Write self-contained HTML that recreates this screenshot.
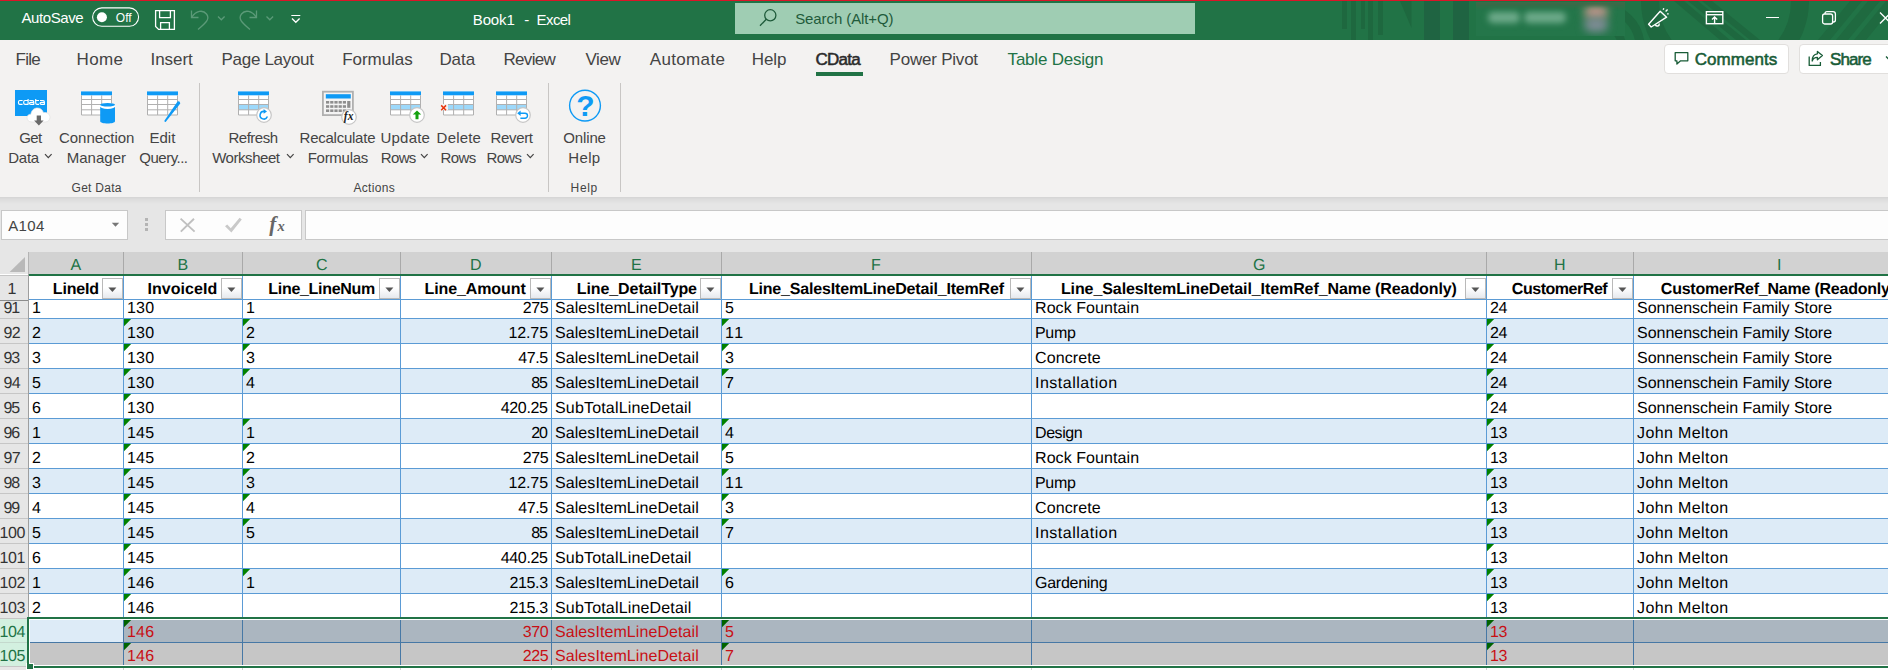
<!DOCTYPE html>
<html><head><meta charset="utf-8"><title>Book1 - Excel</title>
<style>
html,body{margin:0;padding:0;}
body{width:1888px;height:670px;overflow:hidden;position:relative;background:#fff;font-family:"Liberation Sans",sans-serif;}
#a{position:absolute;left:0;top:0;width:1888px;height:670px;overflow:hidden;}
#a div,#a svg,#a span{position:absolute;}
#a span{white-space:pre;line-height:20px;}
</style></head><body><div id="a">
<div style="left:0px;top:0px;width:1888px;height:40px;background:#217346;"></div>
<div style="left:1342px;top:1px;width:5px;height:28px;background:#1e683f;"></div>
<div style="left:1351px;top:1px;width:5px;height:39px;background:#1e683f;"></div>
<div style="left:1361px;top:1px;width:4px;height:28px;background:#1e683f;"></div>
<div style="left:1368px;top:1px;width:5px;height:39px;background:#1e683f;"></div>
<div style="left:1378px;top:1px;width:5px;height:34px;background:#1e683f;"></div>
<div style="left:1424px;top:1px;width:16px;height:39px;background:#1f6442;"></div>
<div style="left:1453px;top:1px;width:16px;height:39px;background:#1f6442;"></div>
<svg style="left:1395px;top:1px" width="20" height="30" viewBox="0 0 20 30"><path d="M5 0 L16.5 0 L16.5 27 Z" fill="#1e683f"/></svg>
<svg style="left:1600px;top:1px" width="288" height="39" viewBox="0 0 288 39"><circle cx="0" cy="46" r="40" fill="none" stroke="#1e683f" stroke-width="9"/><circle cx="0" cy="46" r="22" fill="none" stroke="#1e683f" stroke-width="8"/><path d="M74 0 L84 0 L130 39 L120 39 Z M88 0 L98 0 L146 39 L136 39 Z M102 0 L112 0 L160 39 L150 39 Z" fill="#1e683f"/><circle cx="125" cy="0" r="75" fill="none" stroke="#1e683f" stroke-width="18"/><path d="M250 0 L262 0 L230 39 L218 39 Z M268 0 L280 0 L248 39 L236 39 Z M286 0 L298 0 L266 39 L254 39 Z" fill="#1f6a40"/></svg>
<div style="left:1476px;top:2px;width:149px;height:34px;background:#24764a;overflow:hidden"><div style="left:12px;top:10px;width:32px;height:11px;background:#6daa8a;filter:blur(3px);border-radius:5px"></div><div style="left:48px;top:10px;width:42px;height:11px;background:#6daa8a;filter:blur(3px);border-radius:5px"></div><div style="left:108px;top:2px;width:24px;height:16px;background:#b39385;filter:blur(4px);border-radius:10px"></div><div style="left:108px;top:16px;width:24px;height:14px;background:#7f8c96;filter:blur(4px);border-radius:8px"></div><div style="left:-4px;top:-3px;width:157px;height:7px;background:#3f6848;filter:blur(2px)"></div></div>
<div style="left:0px;top:0px;width:1888px;height:1px;background:#dc1428;"></div>
<svg style="left:90px;top:5px" width="52" height="24" viewBox="0 0 52 24"><rect x="2.6" y="2.9" width="46" height="18.4" rx="9.2" fill="none" stroke="#fff" stroke-width="1.1"/></svg>
<svg style="left:95px;top:10px" width="14" height="14" viewBox="0 0 14 14"><circle cx="6.9" cy="7.2" r="5" fill="#fff"/></svg>
<svg style="left:154px;top:9px" width="22" height="22" viewBox="0 0 22 22" fill="none" stroke="#fff" stroke-width="1.3"><path d="M1.6 1.6 H20.4 V20.4 H4.6 L1.6 17.4 Z"/><path d="M5.6 1.6 V8.6 H16.4 V1.6"/><path d="M6.6 20.4 V13.6 H15.4 V20.4"/></svg>
<svg style="left:189px;top:8px" width="40" height="24" viewBox="0 0 40 24" fill="none" stroke="#5b9a78" stroke-width="1.3"><path d="M2.5 2.5 V9.5 H9.5"/><path d="M2.8 9.2 C7 2.5 14 1.5 17.5 6 C21 10.5 18 14 9 21.5"/><path d="M29 8.5 L32.3 11.8 L35.6 8.5"/></svg>
<svg style="left:237px;top:8px" width="40" height="24" viewBox="0 0 40 24" fill="none" stroke="#5b9a78" stroke-width="1.3"><path d="M19.5 2.5 V9.5 H12.5"/><path d="M19.2 9.2 C15 2.5 8 1.5 4.5 6 C1 10.5 4 14 13 21.5"/><path d="M29.5 8.5 L32.8 11.8 L36.1 8.5"/></svg>
<svg style="left:290px;top:13px" width="12" height="12" viewBox="0 0 12 12" fill="none" stroke="#fff" stroke-width="1.3"><path d="M1.3 2.5 H10.3" stroke-width="1"/><path d="M2 5.5 L5.8 9.3 L9.6 5.5"/></svg>
<div style="left:735px;top:3px;width:460px;height:31px;background:#9fcdb3;"></div>
<svg style="left:758px;top:7px" width="22" height="22" viewBox="0 0 22 22" fill="none" stroke="#1e5a3a" stroke-width="1.3"><circle cx="12.3" cy="8.3" r="5.6"/><path d="M8.3 12.3 L2 18.8"/></svg>
<svg style="left:1646px;top:6px" width="26" height="26" viewBox="0 0 26 26" fill="none" stroke="#fff" stroke-width="1.4" stroke-linejoin="round"><path d="M14.2 5.2 L20.6 11.2 L5.2 21 L2.6 18.2 Z"/><path d="M9.2 18.6 C10.5 21 13.5 20.3 13.3 17.5"/><path d="M17.2 3.8 L17.8 2.2 M19.6 5.6 L21.6 3.6 M21.2 8.2 L22.6 7.6"/></svg>
<svg style="left:1705px;top:10px" width="20" height="16" viewBox="0 0 20 16" fill="none" stroke="#fff" stroke-width="1.4"><rect x="1.4" y="1.7" width="16.4" height="12"/><path d="M1.4 4.7 H17.8"/><path d="M9.6 13 V7.2 M7 9.6 L9.6 7 L12.2 9.6"/></svg>
<div style="left:1765.5px;top:16.6px;width:13px;height:1.3px;background:#fff;"></div>
<svg style="left:1821px;top:10px" width="16" height="16" viewBox="0 0 16 16" fill="none" stroke="#fff" stroke-width="1.3"><rect x="1.6" y="4" width="10" height="10" rx="2"/><path d="M4 4 V3.6 C4 2.4 4.8 1.6 6 1.6 H12 C13.4 1.6 14.4 2.6 14.4 4 V10 C14.4 11.2 13.6 12 12.4 12 H11.8"/></svg>
<svg style="left:1878px;top:11px" width="12" height="14" viewBox="0 0 12 14" fill="none" stroke="#fff" stroke-width="1.3"><path d="M2 1.5 L13 12.5 M2 12.5 L13 1.5"/></svg>
<div style="left:0px;top:40px;width:1888px;height:157px;background:#f3f2f1;"></div>
<div style="left:815.5px;top:72.3px;width:47.5px;height:3.3px;background:#217346;"></div>
<div style="left:1664px;top:44px;width:124.5px;height:29.5px;background:#fff;border:1px solid #e1dfdd;border-radius:4px;box-sizing:border-box"></div>
<div style="left:1799px;top:44px;width:110px;height:29.5px;background:#fff;border:1px solid #e1dfdd;border-radius:4px;box-sizing:border-box"></div>
<svg style="left:1673px;top:51px" width="18" height="16" viewBox="0 0 18 16" fill="none" stroke="#185c37" stroke-width="1.3" stroke-linejoin="round"><path d="M2.2 1.6 H14.8 V9.8 H7.6 L3.9 13 V9.8 H2.2 Z"/></svg>
<svg style="left:1807px;top:50px" width="18" height="18" viewBox="0 0 18 18" fill="none" stroke="#185c37" stroke-width="1.3" stroke-linejoin="round"><path d="M2.2 6.6 V15.4 H13.4 V12"/><path d="M10.4 1.4 L15.4 5.6 L10.4 9.8 V7.4 C7.4 7.4 6 8.6 5.2 11 C5.2 6.6 7.4 4 10.4 3.8 Z"/></svg>
<svg style="left:1884.6px;top:55px" width="10" height="8" viewBox="0 0 10 8" fill="none" stroke="#185c37" stroke-width="1.3"><path d="M1 1.5 L5 5.5 L9 1.5"/></svg>
<div style="left:199px;top:83px;width:1px;height:109px;background:#c8c6c4;"></div>
<div style="left:548px;top:83px;width:1px;height:109px;background:#c8c6c4;"></div>
<div style="left:620px;top:83px;width:1px;height:109px;background:#c8c6c4;"></div>
<div style="left:15px;top:90px;width:32px;height:26px;background:#0e9af5;"></div>
<svg style="left:17px;top:98px" width="30" height="9" viewBox="0 0 30 9" fill="none" stroke="#fff" stroke-width="1.15" stroke-linejoin="round"><path d="M5.6 2.5 H2.9 C1.9 2.5 1.5 3 1.5 3.9 V4.9 C1.5 5.8 1.9 6.3 2.9 6.3 H5.6"/><path d="M11.1 1 V6.3 H8.1 C7.1 6.3 6.7 5.8 6.7 4.9 V3.9 C6.7 3 7.1 2.5 8.1 2.5 H11.1"/><path d="M12.4 2.5 H15.4 C16.4 2.5 16.8 3 16.8 3.9 V6.3 H13.8 C12.8 6.3 12.4 5.9 12.4 5.3 C12.4 4.7 12.8 4.3 13.8 4.3 H16.8"/><path d="M18.7 1 V4.9 C18.7 5.8 19.1 6.3 20.1 6.3 H22 M18 2.5 H22"/><path d="M23 2.5 H26 C27 2.5 27.4 3 27.4 3.9 V6.3 H24.4 C23.4 6.3 23 5.9 23 5.3 C23 4.7 23.4 4.3 24.4 4.3 H27.4"/></svg>
<svg style="left:25px;top:104.6px" width="28" height="22" viewBox="0 0 28 22"><path d="M7 17 C3.6 17 2 15 2 12.8 C2 10.6 3.8 9 5.9 9.3 C6.2 5.6 9 3 12.4 3 C15.4 3 17.6 4.8 18.4 7.6 C22 7 25 9 25 12.4 C25 15 23 17 20.2 17 Z" fill="#fff" stroke="#e2e2e2" stroke-width="0.7"/><path d="M11.7 10.4 H16 V15.6 H18.6 L13.85 20.4 L9.1 15.6 H11.7 Z" fill="#6a6a6a"/></svg>
<svg style="left:80px;top:90.5px" width="34" height="26" viewBox="0 0 34 26"><rect x="1" y="0.4" width="31" height="23.8" fill="#fff"/><rect x="1" y="0.4" width="31" height="3.9" fill="#0e9af5"/><g fill="none" stroke="#b0b0b0" stroke-width="1"><path d="M1.5 4.3 V24 H31.5 V4.3"/><path d="M1.4 8.5 H31.6 M1.4 13.5 H31.6 M1.4 18.8 H31.6 M11.6 4.3 V24 M21.7 4.3 V24"/></g></svg>
<svg style="left:99px;top:102px" width="18" height="23" viewBox="0 0 18 23"><path d="M1.2 3 V19.2 C1.2 22.2 16 22.2 16 19.2 V3 Z" fill="#0e9af5"/><ellipse cx="8.6" cy="4.0" rx="8" ry="2.9" fill="#fff"/><ellipse cx="8.6" cy="2.7" rx="7.4" ry="1.8" fill="#0e9af5"/></svg>
<svg style="left:146px;top:90.5px" width="34" height="26" viewBox="0 0 34 26"><rect x="1" y="0.4" width="31" height="23.8" fill="#fff"/><rect x="1" y="0.4" width="31" height="3.9" fill="#0e9af5"/><g fill="none" stroke="#b0b0b0" stroke-width="1"><path d="M1.5 4.3 V24 H31.5 V4.3"/><path d="M1.4 8.5 H31.6 M1.4 13.5 H31.6 M1.4 18.8 H31.6 M11.6 4.3 V24 M21.7 4.3 V24"/></g></svg>
<svg style="left:162px;top:100px" width="20" height="24" viewBox="0 0 20 24"><path d="M18.27 3.41 L3.83 21.73 Q2.6 22.4 2.37 20.67 L15.53 1.39 Q17.9 0.6 18.27 3.41 Z" fill="#0e9af5"/></svg>
<svg style="left:237px;top:90.5px" width="34" height="26" viewBox="0 0 34 26"><rect x="1" y="0.4" width="31" height="23.8" fill="#fff"/><rect x="1" y="13.5" width="31" height="5.3" fill="#9dd9fb"/><rect x="1" y="0.4" width="31" height="3.9" fill="#0e9af5"/><g fill="none" stroke="#b0b0b0" stroke-width="1"><path d="M1.5 4.3 V24 H31.5 V4.3"/><path d="M1.4 8.5 H31.6 M1.4 13.5 H31.6 M1.4 18.8 H31.6 M11.6 4.3 V24 M21.7 4.3 V24"/></g></svg>
<svg style="left:255px;top:105.8px" width="18" height="18" viewBox="-9 -9 18 18"><circle r="7.3" fill="#fff" stroke="#c6c6c6" stroke-width="1.2"/><path d="M3.4 1.6 A3.8 3.8 0 1 1 0.6 -3.5" fill="none" stroke="#0e9af5" stroke-width="1.5"/><path d="M-0.4 -6 L3 -3.4 L-0.4 -1.2 Z" fill="#0e9af5"/></svg>
<svg style="left:321px;top:90px" width="34" height="28" viewBox="0 0 34 28"><rect x="1.9" y="1.7" width="30" height="23.4" fill="#f4f4f4" stroke="#b0b0b0" stroke-width="1.8"/><rect x="4.8" y="4.2" width="25" height="4.3" fill="#0e9af5"/><g fill="#8e8e8e"><rect x="5.0" y="11.0" width="3.2" height="2.6"/><rect x="5.0" y="15.2" width="3.2" height="2.6"/><rect x="5.0" y="19.4" width="3.2" height="2.6"/><rect x="9.2" y="11.0" width="3.2" height="2.6"/><rect x="9.2" y="15.2" width="3.2" height="2.6"/><rect x="9.2" y="19.4" width="3.2" height="2.6"/><rect x="13.4" y="11.0" width="3.2" height="2.6"/><rect x="13.4" y="15.2" width="3.2" height="2.6"/><rect x="13.4" y="19.4" width="3.2" height="2.6"/><rect x="17.6" y="11.0" width="3.2" height="2.6"/><rect x="17.6" y="15.2" width="3.2" height="2.6"/><rect x="17.6" y="19.4" width="3.2" height="2.6"/><rect x="21.8" y="11.0" width="3.2" height="2.6"/><rect x="21.8" y="15.2" width="3.2" height="2.6"/><rect x="21.8" y="19.4" width="3.2" height="2.6"/><rect x="26.2" y="11" width="3.2" height="6.8"/></g></svg>
<svg style="left:339.5px;top:108.3px" width="18" height="18" viewBox="-9 -9 18 18"><circle r="7.3" fill="#fff" stroke="#c6c6c6" stroke-width="1.2"/><text x="-5.2" y="3.4" font-family="Liberation Serif" font-style="italic" font-weight="700" font-size="11.5" fill="#222">fx</text></svg>
<svg style="left:389px;top:90.5px" width="34" height="26" viewBox="0 0 34 26"><rect x="1" y="0.4" width="31" height="23.8" fill="#fff"/><rect x="1" y="13.5" width="31" height="5.3" fill="#9dd9fb"/><rect x="1" y="0.4" width="31" height="3.9" fill="#0e9af5"/><g fill="none" stroke="#b0b0b0" stroke-width="1"><path d="M1.5 4.3 V24 H31.5 V4.3"/><path d="M1.4 8.5 H31.6 M1.4 13.5 H31.6 M1.4 18.8 H31.6 M11.6 4.3 V24 M21.7 4.3 V24"/></g></svg>
<svg style="left:407.5px;top:105.8px" width="18" height="18" viewBox="-9 -9 18 18"><circle r="7.3" fill="#fff" stroke="#c6c6c6" stroke-width="1.2"/><path d="M0 -4.6 L4.2 -0.4 H1.5 V4.2 H-1.5 V-0.4 H-4.2 Z" fill="#13a10e"/></svg>
<svg style="left:442px;top:90.5px" width="34" height="26" viewBox="0 0 34 26"><rect x="1" y="0.4" width="31" height="23.8" fill="#fff"/><rect x="1" y="13.5" width="31" height="5.3" fill="#9dd9fb"/><rect x="1" y="0.4" width="31" height="3.9" fill="#0e9af5"/><g fill="none" stroke="#b0b0b0" stroke-width="1"><path d="M1.5 4.3 V24 H31.5 V4.3"/><path d="M1.4 8.5 H31.6 M1.4 13.5 H31.6 M1.4 18.8 H31.6 M11.6 4.3 V24 M21.7 4.3 V24"/></g></svg>
<div style="left:441px;top:104px;width:6.5px;height:6px;background:#f3f2f1;"></div>
<svg style="left:440px;top:103.5px" width="8" height="8" viewBox="0 0 8 8"><path d="M1.2 1.4 L6 6.2 M6 1.4 L1.2 6.2" stroke="#e8340c" stroke-width="1.5" fill="none"/></svg>
<svg style="left:495px;top:90.5px" width="34" height="26" viewBox="0 0 34 26"><rect x="1" y="0.4" width="31" height="23.8" fill="#fff"/><rect x="1" y="13.5" width="31" height="5.3" fill="#9dd9fb"/><rect x="1" y="0.4" width="31" height="3.9" fill="#0e9af5"/><g fill="none" stroke="#b0b0b0" stroke-width="1"><path d="M1.5 4.3 V24 H31.5 V4.3"/><path d="M1.4 8.5 H31.6 M1.4 13.5 H31.6 M1.4 18.8 H31.6 M11.6 4.3 V24 M21.7 4.3 V24"/></g></svg>
<svg style="left:513.5px;top:105.8px" width="18" height="18" viewBox="-9 -9 18 18"><circle r="7.3" fill="#fff" stroke="#c6c6c6" stroke-width="1.2"/><path d="M-3.4 -1.8 H2 A2.5 2.5 0 0 1 2 3.2 H-2.6" fill="none" stroke="#0e9af5" stroke-width="1.4"/><path d="M-5.8 -1.8 L-2.4 -4.6 V1 Z" fill="#0e9af5"/></svg>
<svg style="left:567px;top:88px" width="36" height="36" viewBox="0 0 36 36"><circle cx="18" cy="17.6" r="15.4" fill="none" stroke="#0e9af5" stroke-width="1.4"/></svg>
<svg style="left:44.3px;top:152.8px" width="9" height="7" viewBox="0 0 9 7" fill="none" stroke="#444" stroke-width="1.2"><path d="M1 1.2 L4.3 4.6 L7.6 1.2"/></svg>
<svg style="left:285.8px;top:152.8px" width="9" height="7" viewBox="0 0 9 7" fill="none" stroke="#444" stroke-width="1.2"><path d="M1 1.2 L4.3 4.6 L7.6 1.2"/></svg>
<svg style="left:420.2px;top:152.8px" width="9" height="7" viewBox="0 0 9 7" fill="none" stroke="#444" stroke-width="1.2"><path d="M1 1.2 L4.3 4.6 L7.6 1.2"/></svg>
<svg style="left:526.2px;top:152.8px" width="9" height="7" viewBox="0 0 9 7" fill="none" stroke="#444" stroke-width="1.2"><path d="M1 1.2 L4.3 4.6 L7.6 1.2"/></svg>
<div style="left:0;top:197px;width:1888px;height:55px;background:linear-gradient(#d4d4d4 0px,#dcdcdc 2px,#e6e6e6 7px,#e6e6e6 55px)"></div>
<div style="left:1px;top:210px;width:127px;height:30px;background:#fdfdfd;border:1px solid #c8c8c8;box-sizing:border-box"></div>
<div style="left:165px;top:210px;width:137px;height:30px;background:#fdfdfd;border:1px solid #c8c8c8;box-sizing:border-box"></div>
<div style="left:305px;top:210px;width:1600px;height:30px;background:#fdfdfd;border:1px solid #c8c8c8;box-sizing:border-box"></div>
<svg style="left:111px;top:222px" width="9" height="6" viewBox="0 0 9 6"><path d="M0.8 0.8 H8.2 L4.5 4.8 Z" fill="#777"/></svg>
<div style="left:145.2px;top:218.4px;width:2.8px;height:2.5px;background:#b4b4b4;"></div>
<div style="left:145.2px;top:223.3px;width:2.8px;height:2.5px;background:#b4b4b4;"></div>
<div style="left:145.2px;top:228.2px;width:2.8px;height:2.5px;background:#b4b4b4;"></div>
<svg style="left:179px;top:217px" width="18" height="16" viewBox="0 0 18 16" fill="none" stroke="#c0c0c0" stroke-width="1.9"><path d="M1.6 1.6 L15.6 14.6 M15 1.8 L1.8 14.6"/></svg>
<svg style="left:224px;top:217px" width="19" height="17" viewBox="0 0 19 17" fill="#c9c9c9" stroke="none"><path d="M1 9.2 L3.2 7.4 L6.8 11.2 L15.6 0.8 L17.8 2.4 L7.4 15.6 Z"/></svg>
<div style="left:0px;top:252px;width:1888px;height:22px;background:#e6e6e6;"></div>
<div style="left:28px;top:252px;width:1860px;height:22px;background:#d2d2d2;"></div>
<div style="left:28px;top:274px;width:1860px;height:2px;background:#217346;"></div>
<svg style="left:8px;top:256px" width="18" height="17" viewBox="0 0 18 17"><path d="M17 1 V16 H1.6 Z" fill="#b9b9b9"/></svg>
<div style="left:123px;top:252px;width:1px;height:22px;background:#a9a9a9;"></div>
<div style="left:242px;top:252px;width:1px;height:22px;background:#a9a9a9;"></div>
<div style="left:400px;top:252px;width:1px;height:22px;background:#a9a9a9;"></div>
<div style="left:551px;top:252px;width:1px;height:22px;background:#a9a9a9;"></div>
<div style="left:721px;top:252px;width:1px;height:22px;background:#a9a9a9;"></div>
<div style="left:1031px;top:252px;width:1px;height:22px;background:#a9a9a9;"></div>
<div style="left:1486px;top:252px;width:1px;height:22px;background:#a9a9a9;"></div>
<div style="left:1633px;top:252px;width:1px;height:22px;background:#a9a9a9;"></div>
<div style="left:28px;top:276px;width:1860px;height:394px;background:#fff;"></div>
<div style="left:0px;top:276px;width:28px;height:394px;background:#e6e6e6;"></div>
<div style="left:28px;top:252px;width:1px;height:22px;background:#b4b4b4;"></div>
<div style="left:28px;top:274px;width:1px;height:396px;background:#9e9e9e;"></div>
<div style="left:29px;top:319px;width:1859px;height:24px;background:#ddebf7;"></div>
<div style="left:29px;top:369px;width:1859px;height:24px;background:#ddebf7;"></div>
<div style="left:29px;top:419px;width:1859px;height:24px;background:#ddebf7;"></div>
<div style="left:29px;top:469px;width:1859px;height:24px;background:#ddebf7;"></div>
<div style="left:29px;top:519px;width:1859px;height:24px;background:#ddebf7;"></div>
<div style="left:29px;top:569px;width:1859px;height:24px;background:#ddebf7;"></div>
<div style="left:29px;top:619px;width:1859px;height:23px;background:#abb6c0;"></div>
<div style="left:29px;top:643px;width:1859px;height:22px;background:#c6c6c6;"></div>
<div style="left:30px;top:620px;width:93px;height:22px;background:#ddebf7;"></div>
<div style="left:29px;top:299px;width:1859px;height:1px;background:#5b9bd5;"></div>
<div style="left:29px;top:318px;width:1859px;height:1px;background:#5b9bd5;"></div>
<div style="left:29px;top:343px;width:1859px;height:1px;background:#5b9bd5;"></div>
<div style="left:29px;top:368px;width:1859px;height:1px;background:#5b9bd5;"></div>
<div style="left:29px;top:393px;width:1859px;height:1px;background:#5b9bd5;"></div>
<div style="left:29px;top:418px;width:1859px;height:1px;background:#5b9bd5;"></div>
<div style="left:29px;top:443px;width:1859px;height:1px;background:#5b9bd5;"></div>
<div style="left:29px;top:468px;width:1859px;height:1px;background:#5b9bd5;"></div>
<div style="left:29px;top:493px;width:1859px;height:1px;background:#5b9bd5;"></div>
<div style="left:29px;top:518px;width:1859px;height:1px;background:#5b9bd5;"></div>
<div style="left:29px;top:543px;width:1859px;height:1px;background:#5b9bd5;"></div>
<div style="left:29px;top:568px;width:1859px;height:1px;background:#5b9bd5;"></div>
<div style="left:29px;top:593px;width:1859px;height:1px;background:#5b9bd5;"></div>
<div style="left:29px;top:642px;width:1859px;height:1px;background:#4778a5;"></div>
<div style="left:123px;top:276px;width:1px;height:341px;background:#5b9bd5;"></div>
<div style="left:123px;top:620px;width:1px;height:45px;background:#4778a5;"></div>
<div style="left:123px;top:668px;width:1px;height:2px;background:#d4d4d4;"></div>
<div style="left:242px;top:276px;width:1px;height:341px;background:#5b9bd5;"></div>
<div style="left:242px;top:620px;width:1px;height:45px;background:#4778a5;"></div>
<div style="left:242px;top:668px;width:1px;height:2px;background:#d4d4d4;"></div>
<div style="left:400px;top:276px;width:1px;height:341px;background:#5b9bd5;"></div>
<div style="left:400px;top:620px;width:1px;height:45px;background:#4778a5;"></div>
<div style="left:400px;top:668px;width:1px;height:2px;background:#d4d4d4;"></div>
<div style="left:551px;top:276px;width:1px;height:341px;background:#5b9bd5;"></div>
<div style="left:551px;top:620px;width:1px;height:45px;background:#4778a5;"></div>
<div style="left:551px;top:668px;width:1px;height:2px;background:#d4d4d4;"></div>
<div style="left:721px;top:276px;width:1px;height:341px;background:#5b9bd5;"></div>
<div style="left:721px;top:620px;width:1px;height:45px;background:#4778a5;"></div>
<div style="left:721px;top:668px;width:1px;height:2px;background:#d4d4d4;"></div>
<div style="left:1031px;top:276px;width:1px;height:341px;background:#5b9bd5;"></div>
<div style="left:1031px;top:620px;width:1px;height:45px;background:#4778a5;"></div>
<div style="left:1031px;top:668px;width:1px;height:2px;background:#d4d4d4;"></div>
<div style="left:1486px;top:276px;width:1px;height:341px;background:#5b9bd5;"></div>
<div style="left:1486px;top:620px;width:1px;height:45px;background:#4778a5;"></div>
<div style="left:1486px;top:668px;width:1px;height:2px;background:#d4d4d4;"></div>
<div style="left:1633px;top:276px;width:1px;height:341px;background:#5b9bd5;"></div>
<div style="left:1633px;top:620px;width:1px;height:45px;background:#4778a5;"></div>
<div style="left:1633px;top:668px;width:1px;height:2px;background:#d4d4d4;"></div>
<div style="left:0px;top:300px;width:28px;height:1px;background:#8c8c8c;"></div>
<div style="left:0px;top:318px;width:28px;height:1px;background:#c6c6c6;"></div>
<div style="left:0px;top:343px;width:28px;height:1px;background:#c6c6c6;"></div>
<div style="left:0px;top:368px;width:28px;height:1px;background:#c6c6c6;"></div>
<div style="left:0px;top:393px;width:28px;height:1px;background:#c6c6c6;"></div>
<div style="left:0px;top:418px;width:28px;height:1px;background:#c6c6c6;"></div>
<div style="left:0px;top:443px;width:28px;height:1px;background:#c6c6c6;"></div>
<div style="left:0px;top:468px;width:28px;height:1px;background:#c6c6c6;"></div>
<div style="left:0px;top:493px;width:28px;height:1px;background:#c6c6c6;"></div>
<div style="left:0px;top:518px;width:28px;height:1px;background:#c6c6c6;"></div>
<div style="left:0px;top:543px;width:28px;height:1px;background:#c6c6c6;"></div>
<div style="left:0px;top:568px;width:28px;height:1px;background:#c6c6c6;"></div>
<div style="left:0px;top:593px;width:28px;height:1px;background:#c6c6c6;"></div>
<div style="left:0px;top:618px;width:28px;height:1px;background:#c6c6c6;"></div>
<div style="left:0px;top:642px;width:28px;height:1px;background:#c6c6c6;"></div>
<div style="left:0px;top:666px;width:28px;height:1px;background:#c6c6c6;"></div>
<div style="left:0px;top:275px;width:28px;height:1px;background:#c6c6c6;"></div>
<div style="left:0px;top:619px;width:27px;height:47px;background:#d3f0e0;"></div>
<div style="left:0px;top:642px;width:27px;height:1px;background:#c4d9cd;"></div>
<div style="left:0px;top:666px;width:27px;height:1px;background:#c6c6c6;"></div>
<div style="left:0px;top:667px;width:28px;height:3px;background:#e6e6e6;"></div>
<div style="left:28px;top:668px;width:1px;height:2px;background:#9e9e9e;"></div>
<div style="left:27px;top:617px;width:1861px;height:2px;background:#217346;"></div>
<div style="left:29px;top:619px;width:1859px;height:1px;background:#fff;"></div>
<div style="left:27px;top:617px;width:2px;height:51px;background:#217346;"></div>
<div style="left:29px;top:619px;width:1px;height:46px;background:#fff;"></div>
<div style="left:29px;top:665px;width:1859px;height:1px;background:#fff;"></div>
<div style="left:29px;top:666px;width:1859px;height:2px;background:#217346;"></div>
<div style="left:26px;top:663px;width:8px;height:7px;background:#fff;"></div>
<div style="left:27px;top:664px;width:6px;height:5px;background:#217346;"></div>
<div style="left:27px;top:617px;width:2px;height:47px;background:#217346;"></div>
<div style="left:102px;top:278px;width:21px;height:21px;box-sizing:border-box;border:1px solid #b9b9b9;background:linear-gradient(#fff,#fff 45%,#e6e9ee)"></div><svg style="left:108.4px;top:286.6px" width="9" height="6" viewBox="0 0 9 6"><path d="M0.4 0.6 H8.4 L4.4 4.9 Z" fill="#555"/></svg>
<div style="left:221px;top:278px;width:21px;height:21px;box-sizing:border-box;border:1px solid #b9b9b9;background:linear-gradient(#fff,#fff 45%,#e6e9ee)"></div><svg style="left:227.4px;top:286.6px" width="9" height="6" viewBox="0 0 9 6"><path d="M0.4 0.6 H8.4 L4.4 4.9 Z" fill="#555"/></svg>
<div style="left:379px;top:278px;width:21px;height:21px;box-sizing:border-box;border:1px solid #b9b9b9;background:linear-gradient(#fff,#fff 45%,#e6e9ee)"></div><svg style="left:385.4px;top:286.6px" width="9" height="6" viewBox="0 0 9 6"><path d="M0.4 0.6 H8.4 L4.4 4.9 Z" fill="#555"/></svg>
<div style="left:530px;top:278px;width:21px;height:21px;box-sizing:border-box;border:1px solid #b9b9b9;background:linear-gradient(#fff,#fff 45%,#e6e9ee)"></div><svg style="left:536.4px;top:286.6px" width="9" height="6" viewBox="0 0 9 6"><path d="M0.4 0.6 H8.4 L4.4 4.9 Z" fill="#555"/></svg>
<div style="left:700px;top:278px;width:21px;height:21px;box-sizing:border-box;border:1px solid #b9b9b9;background:linear-gradient(#fff,#fff 45%,#e6e9ee)"></div><svg style="left:706.4px;top:286.6px" width="9" height="6" viewBox="0 0 9 6"><path d="M0.4 0.6 H8.4 L4.4 4.9 Z" fill="#555"/></svg>
<div style="left:1010px;top:278px;width:21px;height:21px;box-sizing:border-box;border:1px solid #b9b9b9;background:linear-gradient(#fff,#fff 45%,#e6e9ee)"></div><svg style="left:1016.4px;top:286.6px" width="9" height="6" viewBox="0 0 9 6"><path d="M0.4 0.6 H8.4 L4.4 4.9 Z" fill="#555"/></svg>
<div style="left:1465px;top:278px;width:21px;height:21px;box-sizing:border-box;border:1px solid #b9b9b9;background:linear-gradient(#fff,#fff 45%,#e6e9ee)"></div><svg style="left:1471.4px;top:286.6px" width="9" height="6" viewBox="0 0 9 6"><path d="M0.4 0.6 H8.4 L4.4 4.9 Z" fill="#555"/></svg>
<div style="left:1612px;top:278px;width:21px;height:21px;box-sizing:border-box;border:1px solid #b9b9b9;background:linear-gradient(#fff,#fff 45%,#e6e9ee)"></div><svg style="left:1618.4px;top:286.6px" width="9" height="6" viewBox="0 0 9 6"><path d="M0.4 0.6 H8.4 L4.4 4.9 Z" fill="#555"/></svg>
<svg style="left:124px;top:319px" width="8" height="8" viewBox="0 0 8 8"><path d="M0 0 H7.2 L0 7.2 Z" fill="#008000"/></svg>
<svg style="left:1487px;top:319px" width="8" height="8" viewBox="0 0 8 8"><path d="M0 0 H7.2 L0 7.2 Z" fill="#008000"/></svg>
<svg style="left:243px;top:319px" width="8" height="8" viewBox="0 0 8 8"><path d="M0 0 H7.2 L0 7.2 Z" fill="#008000"/></svg>
<svg style="left:722px;top:319px" width="8" height="8" viewBox="0 0 8 8"><path d="M0 0 H7.2 L0 7.2 Z" fill="#008000"/></svg>
<svg style="left:124px;top:344px" width="8" height="8" viewBox="0 0 8 8"><path d="M0 0 H7.2 L0 7.2 Z" fill="#008000"/></svg>
<svg style="left:1487px;top:344px" width="8" height="8" viewBox="0 0 8 8"><path d="M0 0 H7.2 L0 7.2 Z" fill="#008000"/></svg>
<svg style="left:243px;top:344px" width="8" height="8" viewBox="0 0 8 8"><path d="M0 0 H7.2 L0 7.2 Z" fill="#008000"/></svg>
<svg style="left:722px;top:344px" width="8" height="8" viewBox="0 0 8 8"><path d="M0 0 H7.2 L0 7.2 Z" fill="#008000"/></svg>
<svg style="left:124px;top:369px" width="8" height="8" viewBox="0 0 8 8"><path d="M0 0 H7.2 L0 7.2 Z" fill="#008000"/></svg>
<svg style="left:1487px;top:369px" width="8" height="8" viewBox="0 0 8 8"><path d="M0 0 H7.2 L0 7.2 Z" fill="#008000"/></svg>
<svg style="left:243px;top:369px" width="8" height="8" viewBox="0 0 8 8"><path d="M0 0 H7.2 L0 7.2 Z" fill="#008000"/></svg>
<svg style="left:722px;top:369px" width="8" height="8" viewBox="0 0 8 8"><path d="M0 0 H7.2 L0 7.2 Z" fill="#008000"/></svg>
<svg style="left:124px;top:394px" width="8" height="8" viewBox="0 0 8 8"><path d="M0 0 H7.2 L0 7.2 Z" fill="#008000"/></svg>
<svg style="left:1487px;top:394px" width="8" height="8" viewBox="0 0 8 8"><path d="M0 0 H7.2 L0 7.2 Z" fill="#008000"/></svg>
<svg style="left:124px;top:419px" width="8" height="8" viewBox="0 0 8 8"><path d="M0 0 H7.2 L0 7.2 Z" fill="#008000"/></svg>
<svg style="left:1487px;top:419px" width="8" height="8" viewBox="0 0 8 8"><path d="M0 0 H7.2 L0 7.2 Z" fill="#008000"/></svg>
<svg style="left:243px;top:419px" width="8" height="8" viewBox="0 0 8 8"><path d="M0 0 H7.2 L0 7.2 Z" fill="#008000"/></svg>
<svg style="left:722px;top:419px" width="8" height="8" viewBox="0 0 8 8"><path d="M0 0 H7.2 L0 7.2 Z" fill="#008000"/></svg>
<svg style="left:124px;top:444px" width="8" height="8" viewBox="0 0 8 8"><path d="M0 0 H7.2 L0 7.2 Z" fill="#008000"/></svg>
<svg style="left:1487px;top:444px" width="8" height="8" viewBox="0 0 8 8"><path d="M0 0 H7.2 L0 7.2 Z" fill="#008000"/></svg>
<svg style="left:243px;top:444px" width="8" height="8" viewBox="0 0 8 8"><path d="M0 0 H7.2 L0 7.2 Z" fill="#008000"/></svg>
<svg style="left:722px;top:444px" width="8" height="8" viewBox="0 0 8 8"><path d="M0 0 H7.2 L0 7.2 Z" fill="#008000"/></svg>
<svg style="left:124px;top:469px" width="8" height="8" viewBox="0 0 8 8"><path d="M0 0 H7.2 L0 7.2 Z" fill="#008000"/></svg>
<svg style="left:1487px;top:469px" width="8" height="8" viewBox="0 0 8 8"><path d="M0 0 H7.2 L0 7.2 Z" fill="#008000"/></svg>
<svg style="left:243px;top:469px" width="8" height="8" viewBox="0 0 8 8"><path d="M0 0 H7.2 L0 7.2 Z" fill="#008000"/></svg>
<svg style="left:722px;top:469px" width="8" height="8" viewBox="0 0 8 8"><path d="M0 0 H7.2 L0 7.2 Z" fill="#008000"/></svg>
<svg style="left:124px;top:494px" width="8" height="8" viewBox="0 0 8 8"><path d="M0 0 H7.2 L0 7.2 Z" fill="#008000"/></svg>
<svg style="left:1487px;top:494px" width="8" height="8" viewBox="0 0 8 8"><path d="M0 0 H7.2 L0 7.2 Z" fill="#008000"/></svg>
<svg style="left:243px;top:494px" width="8" height="8" viewBox="0 0 8 8"><path d="M0 0 H7.2 L0 7.2 Z" fill="#008000"/></svg>
<svg style="left:722px;top:494px" width="8" height="8" viewBox="0 0 8 8"><path d="M0 0 H7.2 L0 7.2 Z" fill="#008000"/></svg>
<svg style="left:124px;top:519px" width="8" height="8" viewBox="0 0 8 8"><path d="M0 0 H7.2 L0 7.2 Z" fill="#008000"/></svg>
<svg style="left:1487px;top:519px" width="8" height="8" viewBox="0 0 8 8"><path d="M0 0 H7.2 L0 7.2 Z" fill="#008000"/></svg>
<svg style="left:243px;top:519px" width="8" height="8" viewBox="0 0 8 8"><path d="M0 0 H7.2 L0 7.2 Z" fill="#008000"/></svg>
<svg style="left:722px;top:519px" width="8" height="8" viewBox="0 0 8 8"><path d="M0 0 H7.2 L0 7.2 Z" fill="#008000"/></svg>
<svg style="left:124px;top:544px" width="8" height="8" viewBox="0 0 8 8"><path d="M0 0 H7.2 L0 7.2 Z" fill="#008000"/></svg>
<svg style="left:1487px;top:544px" width="8" height="8" viewBox="0 0 8 8"><path d="M0 0 H7.2 L0 7.2 Z" fill="#008000"/></svg>
<svg style="left:124px;top:569px" width="8" height="8" viewBox="0 0 8 8"><path d="M0 0 H7.2 L0 7.2 Z" fill="#008000"/></svg>
<svg style="left:1487px;top:569px" width="8" height="8" viewBox="0 0 8 8"><path d="M0 0 H7.2 L0 7.2 Z" fill="#008000"/></svg>
<svg style="left:243px;top:569px" width="8" height="8" viewBox="0 0 8 8"><path d="M0 0 H7.2 L0 7.2 Z" fill="#008000"/></svg>
<svg style="left:722px;top:569px" width="8" height="8" viewBox="0 0 8 8"><path d="M0 0 H7.2 L0 7.2 Z" fill="#008000"/></svg>
<svg style="left:124px;top:594px" width="8" height="8" viewBox="0 0 8 8"><path d="M0 0 H7.2 L0 7.2 Z" fill="#008000"/></svg>
<svg style="left:1487px;top:594px" width="8" height="8" viewBox="0 0 8 8"><path d="M0 0 H7.2 L0 7.2 Z" fill="#008000"/></svg>
<svg style="left:124px;top:620px" width="8" height="8" viewBox="0 0 8 8"><path d="M0 0 H7.2 L0 7.2 Z" fill="#006300"/></svg>
<svg style="left:1487px;top:620px" width="8" height="8" viewBox="0 0 8 8"><path d="M0 0 H7.2 L0 7.2 Z" fill="#006300"/></svg>
<svg style="left:722px;top:620px" width="8" height="8" viewBox="0 0 8 8"><path d="M0 0 H7.2 L0 7.2 Z" fill="#006300"/></svg>
<svg style="left:124px;top:643px" width="8" height="8" viewBox="0 0 8 8"><path d="M0 0 H7.2 L0 7.2 Z" fill="#006300"/></svg>
<svg style="left:1487px;top:643px" width="8" height="8" viewBox="0 0 8 8"><path d="M0 0 H7.2 L0 7.2 Z" fill="#006300"/></svg>
<svg style="left:722px;top:643px" width="8" height="8" viewBox="0 0 8 8"><path d="M0 0 H7.2 L0 7.2 Z" fill="#006300"/></svg>
<span style="left:21.50px;top:8px;font-size:15px;color:#fff;letter-spacing:-0.429px;">AutoSave</span>
<span style="left:115.80px;top:8px;font-size:12px;color:#fff;">Off</span>
<span style="left:472.80px;top:10px;font-size:15px;color:#fff;letter-spacing:-0.150px;">Book1</span>
<span style="left:524.30px;top:10px;font-size:15px;color:#fff;">-</span>
<span style="left:536.60px;top:10px;font-size:15px;color:#fff;letter-spacing:-0.600px;">Excel</span>
<span style="left:795.20px;top:9px;font-size:15px;color:#1f5b3b;letter-spacing:-0.092px;">Search (Alt+Q)</span>
<span style="left:15.60px;top:50px;font-size:17px;color:#444;letter-spacing:-0.800px;">File</span>
<span style="left:76.60px;top:50px;font-size:17px;color:#444;letter-spacing:0.300px;">Home</span>
<span style="left:150.60px;top:50px;font-size:17px;color:#444;letter-spacing:-0.080px;">Insert</span>
<span style="left:221.60px;top:50px;font-size:17px;color:#444;letter-spacing:-0.310px;">Page Layout</span>
<span style="left:342.30px;top:50px;font-size:17px;color:#444;letter-spacing:-0.071px;">Formulas</span>
<span style="left:439.40px;top:50px;font-size:17px;color:#444;letter-spacing:-0.067px;">Data</span>
<span style="left:503.50px;top:50px;font-size:17px;color:#444;letter-spacing:-0.700px;">Review</span>
<span style="left:585.40px;top:50px;font-size:17px;color:#444;letter-spacing:-0.367px;">View</span>
<span style="left:649.70px;top:50px;font-size:17px;color:#444;letter-spacing:0.357px;">Automate</span>
<span style="left:751.70px;top:50px;font-size:17px;color:#444;letter-spacing:-0.033px;">Help</span>
<span style="left:889.60px;top:50px;font-size:17px;color:#444;letter-spacing:-0.220px;">Power Pivot</span>
<span style="left:815.50px;top:50px;font-size:17px;color:#2b2b2b;letter-spacing:-0.750px;-webkit-text-stroke:0.55px #2b2b2b;">CData</span>
<span style="left:1007.60px;top:50px;font-size:17px;color:#217346;letter-spacing:-0.218px;">Table Design</span>
<span style="left:1694.70px;top:50px;font-size:17px;color:#185c37;letter-spacing:0.071px;-webkit-text-stroke:0.55px #185c37;">Comments</span>
<span style="left:1830.00px;top:50px;font-size:17px;color:#185c37;letter-spacing:-0.900px;-webkit-text-stroke:0.55px #185c37;">Share</span>
<span style="left:576.20px;top:96px;font-size:30px;color:#0e9af5;font-weight:700;">?</span>
<span style="left:19.30px;top:128px;font-size:15px;color:#444;letter-spacing:-0.600px;">Get</span>
<span style="left:8.30px;top:148px;font-size:15px;color:#444;letter-spacing:-0.267px;">Data</span>
<span style="left:59.10px;top:128px;font-size:15px;color:#444;letter-spacing:-0.078px;">Connection</span>
<span style="left:66.70px;top:148px;font-size:15px;color:#444;letter-spacing:0.033px;">Manager</span>
<span style="left:149.40px;top:128px;font-size:15px;color:#444;letter-spacing:0.033px;">Edit</span>
<span style="left:139.30px;top:148px;font-size:15px;color:#444;letter-spacing:-0.500px;">Query...</span>
<span style="left:228.50px;top:128px;font-size:15px;color:#444;letter-spacing:-0.500px;">Refresh</span>
<span style="left:212.20px;top:148px;font-size:15px;color:#444;letter-spacing:-0.450px;">Worksheet</span>
<span style="left:299.60px;top:128px;font-size:15px;color:#444;letter-spacing:-0.250px;">Recalculate</span>
<span style="left:307.70px;top:148px;font-size:15px;color:#444;letter-spacing:-0.271px;">Formulas</span>
<span style="left:380.40px;top:128px;font-size:15px;color:#444;letter-spacing:0.240px;">Update</span>
<span style="left:380.80px;top:148px;font-size:15px;color:#444;letter-spacing:-0.667px;">Rows</span>
<span style="left:436.60px;top:128px;font-size:15px;color:#444;letter-spacing:0.200px;">Delete</span>
<span style="left:440.40px;top:148px;font-size:15px;color:#444;letter-spacing:-0.533px;">Rows</span>
<span style="left:490.60px;top:128px;font-size:15px;color:#444;letter-spacing:-0.360px;">Revert</span>
<span style="left:486.50px;top:148px;font-size:15px;color:#444;letter-spacing:-0.667px;">Rows</span>
<span style="left:563.20px;top:128px;font-size:15px;color:#444;letter-spacing:-0.120px;">Online</span>
<span style="left:568.30px;top:148px;font-size:15px;color:#444;letter-spacing:0.333px;">Help</span>
<span style="left:71.60px;top:178px;font-size:12px;color:#444;letter-spacing:0.257px;">Get Data</span>
<span style="left:353.50px;top:178px;font-size:12px;color:#444;letter-spacing:0.300px;">Actions</span>
<span style="left:570.60px;top:178px;font-size:12px;color:#444;letter-spacing:0.667px;">Help</span>
<span style="left:8.20px;top:216px;font-size:15px;color:#444;letter-spacing:0.400px;">A104</span>
<span style="left:269.30px;top:214px;font-size:21px;color:#666;font-weight:700;font-family:'Liberation Serif',serif;font-style:italic;">f</span>
<span style="left:277.60px;top:216px;font-size:14.5px;color:#666;font-weight:700;font-family:'Liberation Serif',serif;font-style:italic;">x</span>
<span style="left:70.50px;top:256px;font-size:16px;color:#217346;text-rendering:geometricPrecision;">A</span>
<span style="left:177.50px;top:256px;font-size:16px;color:#217346;text-rendering:geometricPrecision;">B</span>
<span style="left:316.00px;top:256px;font-size:16px;color:#217346;text-rendering:geometricPrecision;">C</span>
<span style="left:470.00px;top:256px;font-size:16px;color:#217346;text-rendering:geometricPrecision;">D</span>
<span style="left:631.00px;top:256px;font-size:16px;color:#217346;text-rendering:geometricPrecision;">E</span>
<span style="left:871.00px;top:256px;font-size:16px;color:#217346;text-rendering:geometricPrecision;">F</span>
<span style="left:1253.00px;top:256px;font-size:16px;color:#217346;text-rendering:geometricPrecision;">G</span>
<span style="left:1554.00px;top:256px;font-size:16px;color:#217346;text-rendering:geometricPrecision;">H</span>
<span style="left:1777.00px;top:256px;font-size:16px;color:#217346;text-rendering:geometricPrecision;">I</span>
<span style="left:52.80px;top:280px;font-size:16px;color:#000;font-weight:700;letter-spacing:-0.180px;text-rendering:geometricPrecision;">LineId</span>
<span style="left:147.40px;top:280px;font-size:16px;color:#000;font-weight:700;letter-spacing:0.075px;text-rendering:geometricPrecision;">InvoiceId</span>
<span style="left:268.30px;top:280px;font-size:16px;color:#000;font-weight:700;letter-spacing:-0.300px;text-rendering:geometricPrecision;">Line_LineNum</span>
<span style="left:424.50px;top:280px;font-size:16px;color:#000;font-weight:700;letter-spacing:-0.100px;text-rendering:geometricPrecision;">Line_Amount</span>
<span style="left:576.80px;top:280px;font-size:16px;color:#000;font-weight:700;letter-spacing:-0.093px;text-rendering:geometricPrecision;">Line_DetailType</span>
<span style="left:748.90px;top:280px;font-size:16px;color:#000;font-weight:700;letter-spacing:-0.174px;text-rendering:geometricPrecision;">Line_SalesItemLineDetail_ItemRef</span>
<span style="left:1060.90px;top:280px;font-size:16px;color:#000;font-weight:700;letter-spacing:-0.087px;text-rendering:geometricPrecision;">Line_SalesItemLineDetail_ItemRef_Name (Readonly)</span>
<span style="left:1511.80px;top:280px;font-size:16px;color:#000;font-weight:700;letter-spacing:-0.460px;text-rendering:geometricPrecision;">CustomerRef</span>
<span style="left:1660.80px;top:280px;font-size:16px;color:#000;font-weight:700;letter-spacing:-0.223px;text-rendering:geometricPrecision;">CustomerRef_Name (Readonly)</span>
<span style="left:7.60px;top:280px;font-size:16px;color:#333;text-rendering:geometricPrecision;">1</span>
<span style="left:3.60px;top:299px;font-size:16px;color:#333;letter-spacing:-1.200px;text-rendering:geometricPrecision;">91</span>
<span style="left:3.60px;top:324px;font-size:16px;color:#333;letter-spacing:-0.700px;text-rendering:geometricPrecision;">92</span>
<span style="left:3.60px;top:349px;font-size:16px;color:#333;letter-spacing:-1.200px;text-rendering:geometricPrecision;">93</span>
<span style="left:3.60px;top:374px;font-size:16px;color:#333;letter-spacing:-0.700px;text-rendering:geometricPrecision;">94</span>
<span style="left:3.60px;top:399px;font-size:16px;color:#333;letter-spacing:-1.200px;text-rendering:geometricPrecision;">95</span>
<span style="left:3.60px;top:424px;font-size:16px;color:#333;letter-spacing:-1.200px;text-rendering:geometricPrecision;">96</span>
<span style="left:3.60px;top:449px;font-size:16px;color:#333;letter-spacing:-0.700px;text-rendering:geometricPrecision;">97</span>
<span style="left:3.60px;top:474px;font-size:16px;color:#333;letter-spacing:-1.200px;text-rendering:geometricPrecision;">98</span>
<span style="left:3.60px;top:499px;font-size:16px;color:#333;letter-spacing:-1.200px;text-rendering:geometricPrecision;">99</span>
<span style="left:-0.60px;top:524px;font-size:16px;color:#333;letter-spacing:-0.350px;text-rendering:geometricPrecision;">100</span>
<span style="left:-0.60px;top:549px;font-size:16px;color:#333;letter-spacing:-0.350px;text-rendering:geometricPrecision;">101</span>
<span style="left:-0.60px;top:574px;font-size:16px;color:#333;letter-spacing:-0.350px;text-rendering:geometricPrecision;">102</span>
<span style="left:-0.60px;top:599px;font-size:16px;color:#333;letter-spacing:-0.350px;text-rendering:geometricPrecision;">103</span>
<span style="left:-0.60px;top:623px;font-size:16px;color:#217346;letter-spacing:-0.350px;text-rendering:geometricPrecision;">104</span>
<span style="left:-0.60px;top:647px;font-size:16px;color:#217346;letter-spacing:-0.350px;text-rendering:geometricPrecision;">105</span>
<span style="left:32.00px;top:299px;font-size:16px;color:#000;text-rendering:geometricPrecision;">1</span>
<span style="left:127.00px;top:299px;font-size:16px;color:#000;letter-spacing:0.175px;text-rendering:geometricPrecision;">130</span>
<span style="left:246.00px;top:299px;font-size:16px;color:#000;text-rendering:geometricPrecision;">1</span>
<span style="left:522.65px;top:299px;font-size:16px;color:#000;letter-spacing:-0.325px;text-rendering:geometricPrecision;">275</span>
<span style="left:555.00px;top:299px;font-size:16px;color:#000;letter-spacing:0.078px;text-rendering:geometricPrecision;">SalesItemLineDetail</span>
<span style="left:725.00px;top:299px;font-size:16px;color:#000;text-rendering:geometricPrecision;">5</span>
<span style="left:1035.00px;top:299px;font-size:16px;color:#000;letter-spacing:0.075px;text-rendering:geometricPrecision;">Rock Fountain</span>
<span style="left:1490.00px;top:299px;font-size:16px;color:#000;letter-spacing:-0.400px;text-rendering:geometricPrecision;">24</span>
<span style="left:1637.00px;top:299px;font-size:16px;color:#000;letter-spacing:-0.025px;text-rendering:geometricPrecision;">Sonnenschein Family Store</span>
<span style="left:32.00px;top:324px;font-size:16px;color:#000;text-rendering:geometricPrecision;">2</span>
<span style="left:127.00px;top:324px;font-size:16px;color:#000;letter-spacing:0.175px;text-rendering:geometricPrecision;">130</span>
<span style="left:246.00px;top:324px;font-size:16px;color:#000;text-rendering:geometricPrecision;">2</span>
<span style="left:508.50px;top:324px;font-size:16px;color:#000;letter-spacing:-0.125px;text-rendering:geometricPrecision;">12.75</span>
<span style="left:555.00px;top:324px;font-size:16px;color:#000;letter-spacing:0.078px;text-rendering:geometricPrecision;">SalesItemLineDetail</span>
<span style="left:725.00px;top:324px;font-size:16px;color:#000;letter-spacing:1.600px;text-rendering:geometricPrecision;">11</span>
<span style="left:1035.00px;top:324px;font-size:16px;color:#000;letter-spacing:-0.333px;text-rendering:geometricPrecision;">Pump</span>
<span style="left:1490.00px;top:324px;font-size:16px;color:#000;letter-spacing:-0.400px;text-rendering:geometricPrecision;">24</span>
<span style="left:1637.00px;top:324px;font-size:16px;color:#000;letter-spacing:-0.025px;text-rendering:geometricPrecision;">Sonnenschein Family Store</span>
<span style="left:32.00px;top:349px;font-size:16px;color:#000;text-rendering:geometricPrecision;">3</span>
<span style="left:127.00px;top:349px;font-size:16px;color:#000;letter-spacing:0.175px;text-rendering:geometricPrecision;">130</span>
<span style="left:246.00px;top:349px;font-size:16px;color:#000;text-rendering:geometricPrecision;">3</span>
<span style="left:518.25px;top:349px;font-size:16px;color:#000;letter-spacing:-0.417px;text-rendering:geometricPrecision;">47.5</span>
<span style="left:555.00px;top:349px;font-size:16px;color:#000;letter-spacing:0.078px;text-rendering:geometricPrecision;">SalesItemLineDetail</span>
<span style="left:725.00px;top:349px;font-size:16px;color:#000;text-rendering:geometricPrecision;">3</span>
<span style="left:1035.00px;top:349px;font-size:16px;color:#000;letter-spacing:0.100px;text-rendering:geometricPrecision;">Concrete</span>
<span style="left:1490.00px;top:349px;font-size:16px;color:#000;letter-spacing:-0.400px;text-rendering:geometricPrecision;">24</span>
<span style="left:1637.00px;top:349px;font-size:16px;color:#000;letter-spacing:-0.025px;text-rendering:geometricPrecision;">Sonnenschein Family Store</span>
<span style="left:32.00px;top:374px;font-size:16px;color:#000;text-rendering:geometricPrecision;">5</span>
<span style="left:127.00px;top:374px;font-size:16px;color:#000;letter-spacing:0.175px;text-rendering:geometricPrecision;">130</span>
<span style="left:246.00px;top:374px;font-size:16px;color:#000;text-rendering:geometricPrecision;">4</span>
<span style="left:531.20px;top:374px;font-size:16px;color:#000;letter-spacing:-1.200px;text-rendering:geometricPrecision;">85</span>
<span style="left:555.00px;top:374px;font-size:16px;color:#000;letter-spacing:0.078px;text-rendering:geometricPrecision;">SalesItemLineDetail</span>
<span style="left:725.00px;top:374px;font-size:16px;color:#000;text-rendering:geometricPrecision;">7</span>
<span style="left:1035.00px;top:374px;font-size:16px;color:#000;letter-spacing:0.509px;text-rendering:geometricPrecision;">Installation</span>
<span style="left:1490.00px;top:374px;font-size:16px;color:#000;letter-spacing:-0.400px;text-rendering:geometricPrecision;">24</span>
<span style="left:1637.00px;top:374px;font-size:16px;color:#000;letter-spacing:-0.025px;text-rendering:geometricPrecision;">Sonnenschein Family Store</span>
<span style="left:32.00px;top:399px;font-size:16px;color:#000;text-rendering:geometricPrecision;">6</span>
<span style="left:127.00px;top:399px;font-size:16px;color:#000;letter-spacing:0.175px;text-rendering:geometricPrecision;">130</span>
<span style="left:500.75px;top:399px;font-size:16px;color:#000;letter-spacing:-0.350px;text-rendering:geometricPrecision;">420.25</span>
<span style="left:555.00px;top:399px;font-size:16px;color:#000;letter-spacing:0.171px;text-rendering:geometricPrecision;">SubTotalLineDetail</span>
<span style="left:1490.00px;top:399px;font-size:16px;color:#000;letter-spacing:-0.400px;text-rendering:geometricPrecision;">24</span>
<span style="left:1637.00px;top:399px;font-size:16px;color:#000;letter-spacing:-0.025px;text-rendering:geometricPrecision;">Sonnenschein Family Store</span>
<span style="left:32.00px;top:424px;font-size:16px;color:#000;text-rendering:geometricPrecision;">1</span>
<span style="left:127.00px;top:424px;font-size:16px;color:#000;letter-spacing:0.175px;text-rendering:geometricPrecision;">145</span>
<span style="left:246.00px;top:424px;font-size:16px;color:#000;text-rendering:geometricPrecision;">1</span>
<span style="left:531.20px;top:424px;font-size:16px;color:#000;letter-spacing:-1.200px;text-rendering:geometricPrecision;">20</span>
<span style="left:555.00px;top:424px;font-size:16px;color:#000;letter-spacing:0.078px;text-rendering:geometricPrecision;">SalesItemLineDetail</span>
<span style="left:725.00px;top:424px;font-size:16px;color:#000;text-rendering:geometricPrecision;">4</span>
<span style="left:1035.00px;top:424px;font-size:16px;color:#000;letter-spacing:-0.420px;text-rendering:geometricPrecision;">Design</span>
<span style="left:1490.00px;top:424px;font-size:16px;color:#000;letter-spacing:-0.400px;text-rendering:geometricPrecision;">13</span>
<span style="left:1637.00px;top:424px;font-size:16px;color:#000;letter-spacing:0.390px;text-rendering:geometricPrecision;">John Melton</span>
<span style="left:32.00px;top:449px;font-size:16px;color:#000;text-rendering:geometricPrecision;">2</span>
<span style="left:127.00px;top:449px;font-size:16px;color:#000;letter-spacing:0.175px;text-rendering:geometricPrecision;">145</span>
<span style="left:246.00px;top:449px;font-size:16px;color:#000;text-rendering:geometricPrecision;">2</span>
<span style="left:522.65px;top:449px;font-size:16px;color:#000;letter-spacing:-0.325px;text-rendering:geometricPrecision;">275</span>
<span style="left:555.00px;top:449px;font-size:16px;color:#000;letter-spacing:0.078px;text-rendering:geometricPrecision;">SalesItemLineDetail</span>
<span style="left:725.00px;top:449px;font-size:16px;color:#000;text-rendering:geometricPrecision;">5</span>
<span style="left:1035.00px;top:449px;font-size:16px;color:#000;letter-spacing:0.075px;text-rendering:geometricPrecision;">Rock Fountain</span>
<span style="left:1490.00px;top:449px;font-size:16px;color:#000;letter-spacing:-0.400px;text-rendering:geometricPrecision;">13</span>
<span style="left:1637.00px;top:449px;font-size:16px;color:#000;letter-spacing:0.390px;text-rendering:geometricPrecision;">John Melton</span>
<span style="left:32.00px;top:474px;font-size:16px;color:#000;text-rendering:geometricPrecision;">3</span>
<span style="left:127.00px;top:474px;font-size:16px;color:#000;letter-spacing:0.175px;text-rendering:geometricPrecision;">145</span>
<span style="left:246.00px;top:474px;font-size:16px;color:#000;text-rendering:geometricPrecision;">3</span>
<span style="left:508.50px;top:474px;font-size:16px;color:#000;letter-spacing:-0.125px;text-rendering:geometricPrecision;">12.75</span>
<span style="left:555.00px;top:474px;font-size:16px;color:#000;letter-spacing:0.078px;text-rendering:geometricPrecision;">SalesItemLineDetail</span>
<span style="left:725.00px;top:474px;font-size:16px;color:#000;letter-spacing:1.600px;text-rendering:geometricPrecision;">11</span>
<span style="left:1035.00px;top:474px;font-size:16px;color:#000;letter-spacing:-0.333px;text-rendering:geometricPrecision;">Pump</span>
<span style="left:1490.00px;top:474px;font-size:16px;color:#000;letter-spacing:-0.400px;text-rendering:geometricPrecision;">13</span>
<span style="left:1637.00px;top:474px;font-size:16px;color:#000;letter-spacing:0.390px;text-rendering:geometricPrecision;">John Melton</span>
<span style="left:32.00px;top:499px;font-size:16px;color:#000;text-rendering:geometricPrecision;">4</span>
<span style="left:127.00px;top:499px;font-size:16px;color:#000;letter-spacing:0.175px;text-rendering:geometricPrecision;">145</span>
<span style="left:246.00px;top:499px;font-size:16px;color:#000;text-rendering:geometricPrecision;">4</span>
<span style="left:518.25px;top:499px;font-size:16px;color:#000;letter-spacing:-0.417px;text-rendering:geometricPrecision;">47.5</span>
<span style="left:555.00px;top:499px;font-size:16px;color:#000;letter-spacing:0.078px;text-rendering:geometricPrecision;">SalesItemLineDetail</span>
<span style="left:725.00px;top:499px;font-size:16px;color:#000;text-rendering:geometricPrecision;">3</span>
<span style="left:1035.00px;top:499px;font-size:16px;color:#000;letter-spacing:0.100px;text-rendering:geometricPrecision;">Concrete</span>
<span style="left:1490.00px;top:499px;font-size:16px;color:#000;letter-spacing:-0.400px;text-rendering:geometricPrecision;">13</span>
<span style="left:1637.00px;top:499px;font-size:16px;color:#000;letter-spacing:0.390px;text-rendering:geometricPrecision;">John Melton</span>
<span style="left:32.00px;top:524px;font-size:16px;color:#000;text-rendering:geometricPrecision;">5</span>
<span style="left:127.00px;top:524px;font-size:16px;color:#000;letter-spacing:0.175px;text-rendering:geometricPrecision;">145</span>
<span style="left:246.00px;top:524px;font-size:16px;color:#000;text-rendering:geometricPrecision;">5</span>
<span style="left:531.20px;top:524px;font-size:16px;color:#000;letter-spacing:-1.200px;text-rendering:geometricPrecision;">85</span>
<span style="left:555.00px;top:524px;font-size:16px;color:#000;letter-spacing:0.078px;text-rendering:geometricPrecision;">SalesItemLineDetail</span>
<span style="left:725.00px;top:524px;font-size:16px;color:#000;text-rendering:geometricPrecision;">7</span>
<span style="left:1035.00px;top:524px;font-size:16px;color:#000;letter-spacing:0.509px;text-rendering:geometricPrecision;">Installation</span>
<span style="left:1490.00px;top:524px;font-size:16px;color:#000;letter-spacing:-0.400px;text-rendering:geometricPrecision;">13</span>
<span style="left:1637.00px;top:524px;font-size:16px;color:#000;letter-spacing:0.390px;text-rendering:geometricPrecision;">John Melton</span>
<span style="left:32.00px;top:549px;font-size:16px;color:#000;text-rendering:geometricPrecision;">6</span>
<span style="left:127.00px;top:549px;font-size:16px;color:#000;letter-spacing:0.175px;text-rendering:geometricPrecision;">145</span>
<span style="left:500.75px;top:549px;font-size:16px;color:#000;letter-spacing:-0.350px;text-rendering:geometricPrecision;">440.25</span>
<span style="left:555.00px;top:549px;font-size:16px;color:#000;letter-spacing:0.171px;text-rendering:geometricPrecision;">SubTotalLineDetail</span>
<span style="left:1490.00px;top:549px;font-size:16px;color:#000;letter-spacing:-0.400px;text-rendering:geometricPrecision;">13</span>
<span style="left:1637.00px;top:549px;font-size:16px;color:#000;letter-spacing:0.390px;text-rendering:geometricPrecision;">John Melton</span>
<span style="left:32.00px;top:574px;font-size:16px;color:#000;text-rendering:geometricPrecision;">1</span>
<span style="left:127.00px;top:574px;font-size:16px;color:#000;letter-spacing:0.175px;text-rendering:geometricPrecision;">146</span>
<span style="left:246.00px;top:574px;font-size:16px;color:#000;text-rendering:geometricPrecision;">1</span>
<span style="left:509.50px;top:574px;font-size:16px;color:#000;letter-spacing:-0.375px;text-rendering:geometricPrecision;">215.3</span>
<span style="left:555.00px;top:574px;font-size:16px;color:#000;letter-spacing:0.078px;text-rendering:geometricPrecision;">SalesItemLineDetail</span>
<span style="left:725.00px;top:574px;font-size:16px;color:#000;text-rendering:geometricPrecision;">6</span>
<span style="left:1035.00px;top:574px;font-size:16px;color:#000;letter-spacing:-0.262px;text-rendering:geometricPrecision;">Gardening</span>
<span style="left:1490.00px;top:574px;font-size:16px;color:#000;letter-spacing:-0.400px;text-rendering:geometricPrecision;">13</span>
<span style="left:1637.00px;top:574px;font-size:16px;color:#000;letter-spacing:0.390px;text-rendering:geometricPrecision;">John Melton</span>
<span style="left:32.00px;top:599px;font-size:16px;color:#000;text-rendering:geometricPrecision;">2</span>
<span style="left:127.00px;top:599px;font-size:16px;color:#000;letter-spacing:0.175px;text-rendering:geometricPrecision;">146</span>
<span style="left:509.50px;top:599px;font-size:16px;color:#000;letter-spacing:-0.375px;text-rendering:geometricPrecision;">215.3</span>
<span style="left:555.00px;top:599px;font-size:16px;color:#000;letter-spacing:0.171px;text-rendering:geometricPrecision;">SubTotalLineDetail</span>
<span style="left:1490.00px;top:599px;font-size:16px;color:#000;letter-spacing:-0.400px;text-rendering:geometricPrecision;">13</span>
<span style="left:1637.00px;top:599px;font-size:16px;color:#000;letter-spacing:0.390px;text-rendering:geometricPrecision;">John Melton</span>
<span style="left:127.00px;top:623px;font-size:16px;color:#c80f14;letter-spacing:0.175px;text-rendering:geometricPrecision;">146</span>
<span style="left:522.65px;top:623px;font-size:16px;color:#c80f14;letter-spacing:-0.325px;text-rendering:geometricPrecision;">370</span>
<span style="left:555.00px;top:623px;font-size:16px;color:#c80f14;letter-spacing:0.078px;text-rendering:geometricPrecision;">SalesItemLineDetail</span>
<span style="left:725.00px;top:623px;font-size:16px;color:#c80f14;text-rendering:geometricPrecision;">5</span>
<span style="left:1490.00px;top:623px;font-size:16px;color:#c80f14;letter-spacing:-0.400px;text-rendering:geometricPrecision;">13</span>
<span style="left:127.00px;top:647px;font-size:16px;color:#c80f14;letter-spacing:0.175px;text-rendering:geometricPrecision;">146</span>
<span style="left:522.65px;top:647px;font-size:16px;color:#c80f14;letter-spacing:-0.325px;text-rendering:geometricPrecision;">225</span>
<span style="left:555.00px;top:647px;font-size:16px;color:#c80f14;letter-spacing:0.078px;text-rendering:geometricPrecision;">SalesItemLineDetail</span>
<span style="left:725.00px;top:647px;font-size:16px;color:#c80f14;text-rendering:geometricPrecision;">7</span>
<span style="left:1490.00px;top:647px;font-size:16px;color:#c80f14;letter-spacing:-0.400px;text-rendering:geometricPrecision;">13</span>
</div></body></html>
